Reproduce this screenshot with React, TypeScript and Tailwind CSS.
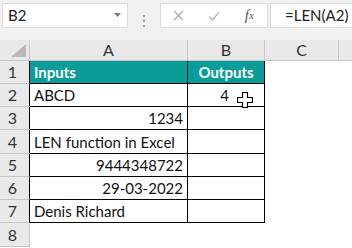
const font = { fontFamily: 'Lato, "Liberation Sans", sans-serif' };

type Row = { n: number; a: string; b: string; aRight?: boolean; h: string };

const rows: Row[] = [
  { n: 1, a: "Inputs", b: "Outputs", h: "h-[23px]" },
  { n: 2, a: "ABCD", b: "4", h: "h-[23px]" },
  { n: 3, a: "1234", b: "", aRight: true, h: "h-[23px]" },
  { n: 4, a: "LEN function in Excel", b: "", h: "h-[24px]" },
  { n: 5, a: "9444348722", b: "", aRight: true, h: "h-[23px]" },
  { n: 6, a: "29-03-2022", b: "", aRight: true, h: "h-[23px]" },
  { n: 7, a: "Denis Richard", b: "", h: "h-[23px]" },
];

function CellCursor() {
  return (
    <svg width="16" height="16" viewBox="0 0 16 16" className="absolute left-[237px] top-[92px]">
      <polygon
        points="5.5,0.5 10.5,0.5 10.5,5.5 15.5,5.5 15.5,10.5 10.5,10.5 10.5,15.5 5.5,15.5 5.5,10.5 0.5,10.5 0.5,5.5 5.5,5.5"
        fill="#fff"
        stroke="#000"
        strokeWidth="1.2"
      />
    </svg>
  );
}

function Toolbar() {
  return (
    <div className="flex h-[40px] bg-[#f1f1f1] pt-[3px] pl-[2px]">
      <div className="flex h-[25px] w-[126px] items-center justify-between border border-[#dcdcdc] bg-white pl-[5px] pr-[6px] text-[15px] text-[#222]">
        <span>B2</span>
        <svg width="7" height="5" viewBox="0 0 7 5">
          <polygon points="0,0 7,0 3.5,4" fill="#777" />
        </svg>
      </div>
      <div className="flex w-[32px] flex-col items-center justify-center gap-[3px] pb-[1px]">
        <span className="h-[2px] w-[2px] bg-[#a0a0a0]" />
        <span className="h-[2px] w-[2px] bg-[#a0a0a0]" />
        <span className="h-[2px] w-[2px] bg-[#a0a0a0]" />
      </div>
      <div className="flex h-[25px] w-[108px] items-center border border-[#dcdcdc] bg-white">
        <div className="flex w-[36px] justify-center">
          <svg width="11" height="11" viewBox="0 0 11 11">
            <path d="M1 1 L10 10 M10 1 L1 10" stroke="#a8a8a8" strokeWidth="1.2" />
          </svg>
        </div>
        <div className="flex w-[36px] justify-center">
          <svg width="12" height="10" viewBox="0 0 12 10">
            <path d="M1 5.5 L4.5 9 L11 1" stroke="#b4b4b4" strokeWidth="1.2" fill="none" />
          </svg>
        </div>
        <div
          className="flex w-[36px] justify-center text-[15px] italic text-[#555]"
          style={{ fontFamily: '"Liberation Serif", serif' }}
        >
          f<span className="mt-[3px] text-[11px]">x</span>
        </div>
      </div>
      <div className="ml-[2px] flex h-[25px] flex-1 items-center border-y border-l border-[#dcdcdc] bg-white pl-[14px] text-[15px] text-[#222]">
        =LEN(A2)
      </div>
    </div>
  );
}

export default function App() {
  return (
    <div className="relative h-[248px] w-[352px] overflow-hidden bg-white" style={font}>
      <Toolbar />
      <div className="flex h-[21px] bg-[#e9e9e9] text-[16px] text-[#333]">
        <div className="relative w-[30px] border-r border-b border-[#c6c6c6]">
          <svg width="15" height="13" viewBox="0 0 15 13" className="absolute left-[11px] top-[4px]">
            <polygon points="15,0 15,13 0,13" fill="#b9b9b9" />
          </svg>
        </div>
        <div className="flex w-[158px] items-center justify-center border-r border-b border-[#c6c6c6]">A</div>
        <div className="flex w-[77px] items-center justify-center border-r border-b border-[#c6c6c6]">B</div>
        <div className="flex w-[74px] items-center justify-center border-r border-b border-[#c6c6c6]">C</div>
        <div className="flex-1 border-b border-[#c6c6c6]" />
      </div>
      {rows.map((r) => {
        const head = r.n === 1;
        return (
          <div key={r.n} className={`flex ${r.h}`}>
            <div className="flex w-[30px] items-center justify-center border-r border-b border-r-black border-b-[#c6c6c6] bg-[#e9e9e9] pr-[4px] text-[16px] text-[#333]">
              {r.n}
            </div>
            <div
              className={`flex w-[158px] items-center overflow-hidden whitespace-nowrap border-r border-b border-black px-[4px] pt-[1px] text-[15px] ${
                head ? "bg-[#0a9c98] font-bold text-white" : "text-[#111]"
              } ${r.aRight ? "justify-end" : "justify-start"}`}
            >
              {r.a}
            </div>
            <div
              className={`flex w-[77px] items-center whitespace-nowrap border-r border-b border-black pt-[1px] text-[15px] ${
                head ? "justify-center bg-[#0a9c98] font-bold text-white" : "justify-end pr-[35px] text-[#111]"
              }`}
            >
              {r.b}
            </div>
            <div className="flex-1" />
          </div>
        );
      })}
      <div className="flex h-[24px]">
        <div className="flex w-[30px] items-center justify-center border-r border-b border-[#c6c6c6] bg-[#e9e9e9] pr-[4px] text-[16px] text-[#333]">
          8
        </div>
        <div className="flex-1" />
      </div>
      <CellCursor />
    </div>
  );
}
